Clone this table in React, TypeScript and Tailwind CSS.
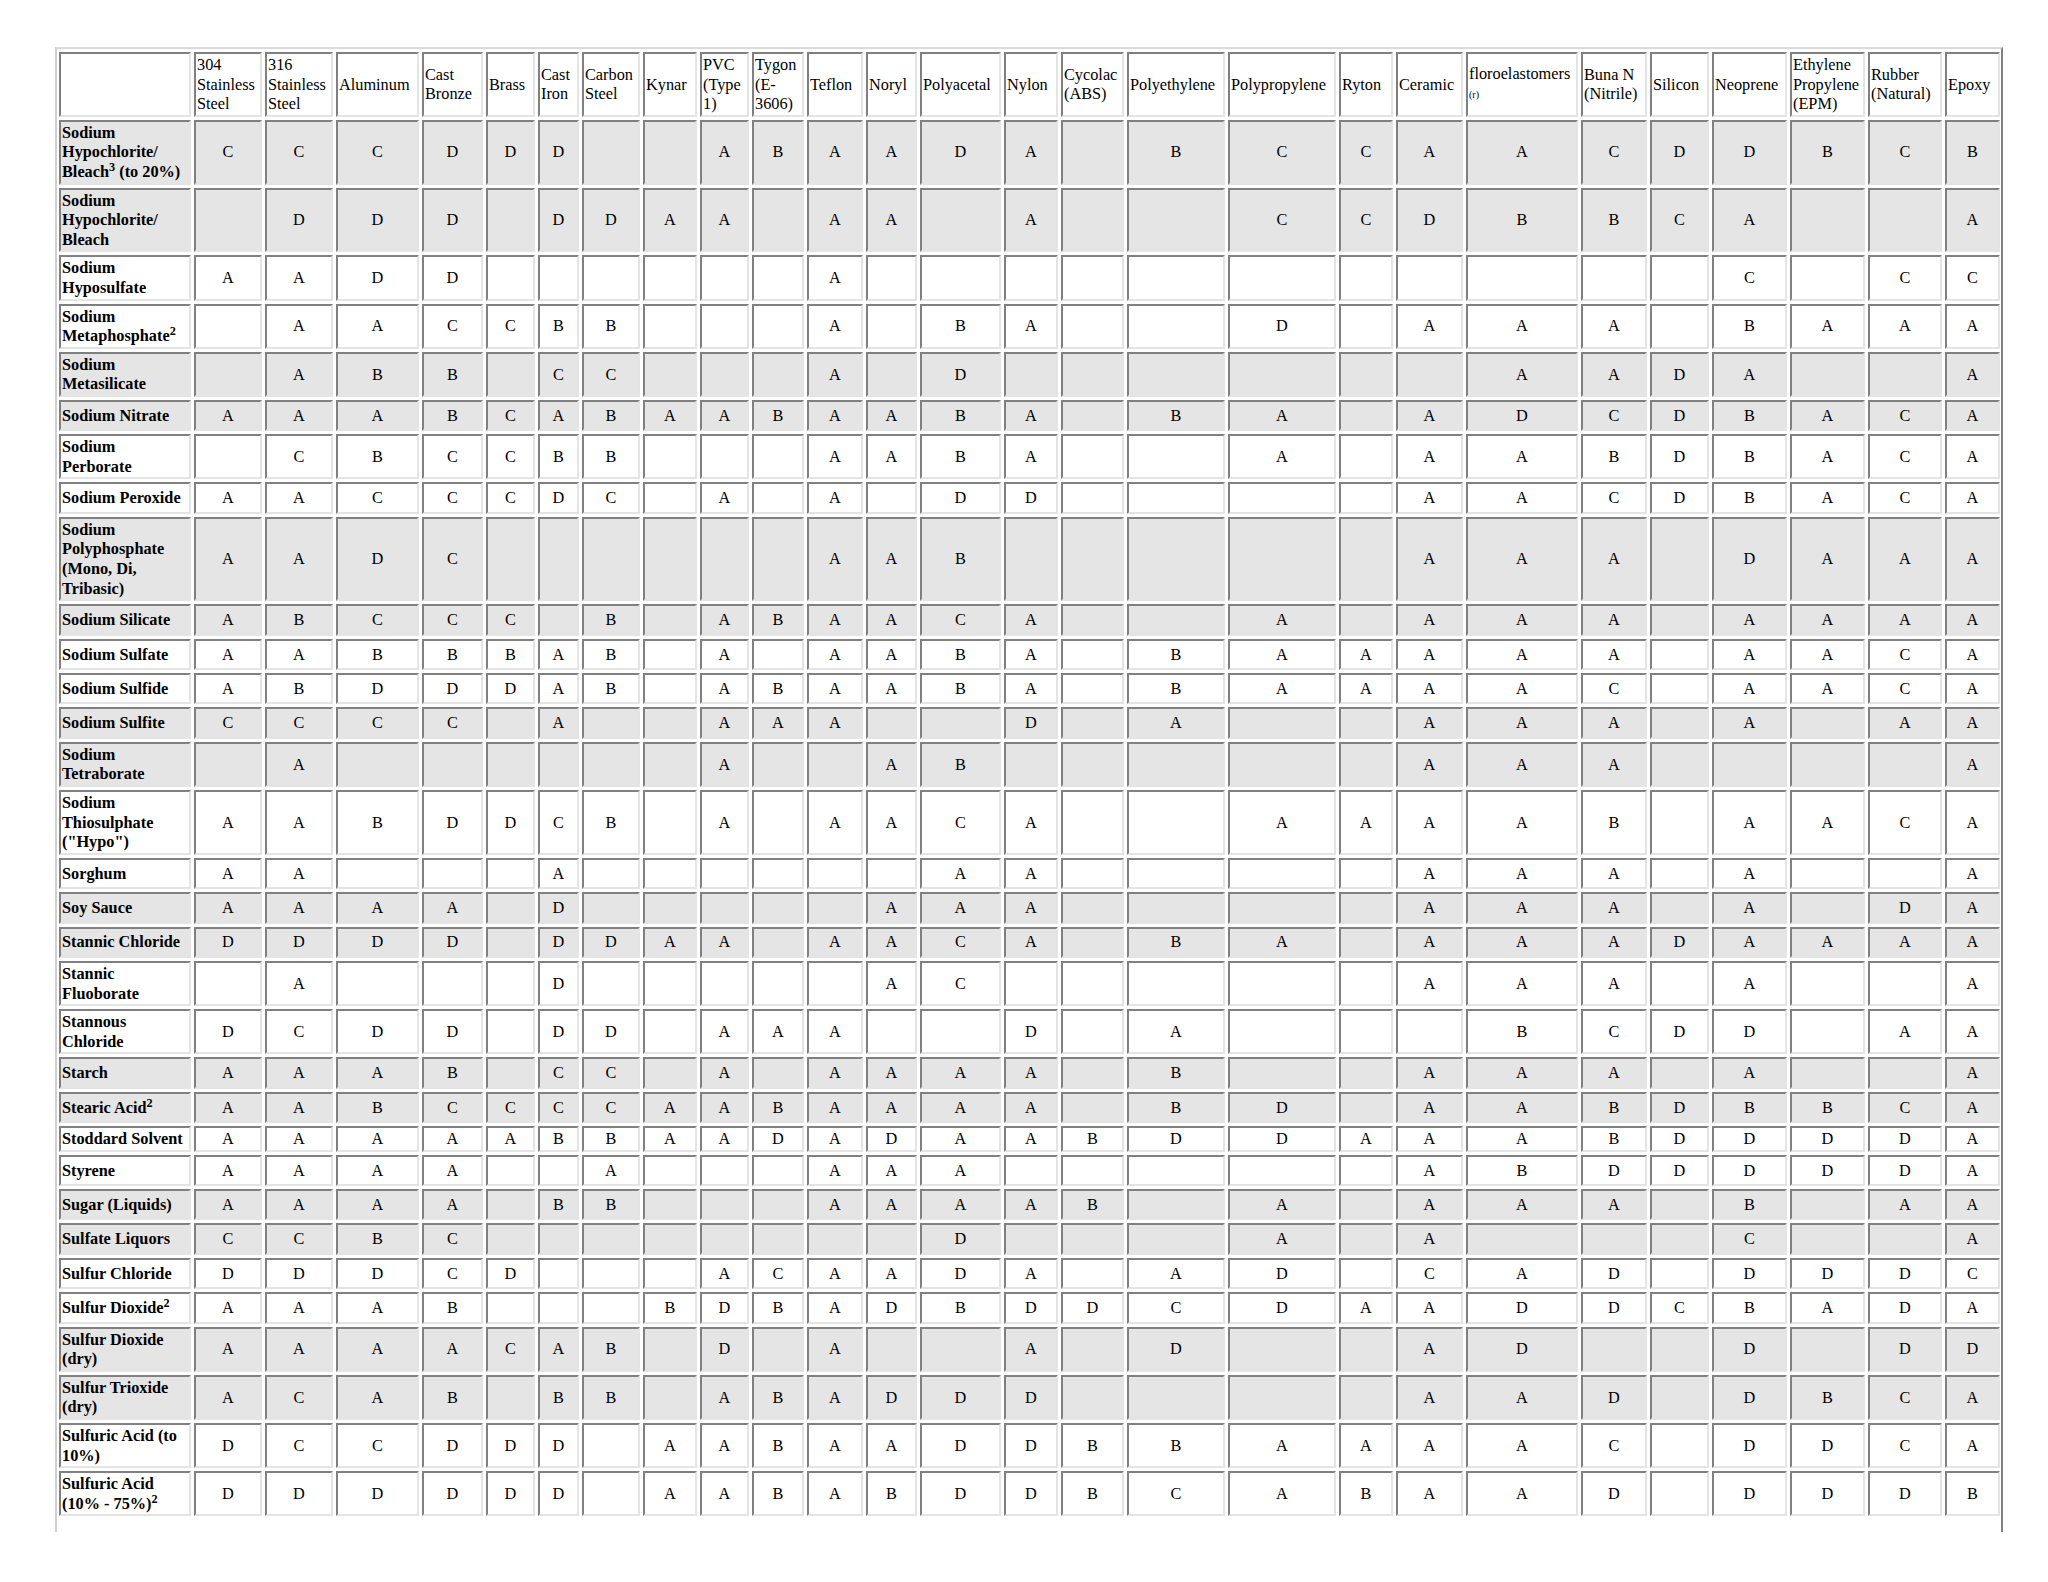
import React from "react";

const colWidths =
  "grid-cols-[132px_68px_68px_83px_61px_49px_41px_58px_54px_49px_52px_56px_51px_81px_54px_63px_98px_108px_54px_67px_112px_66px_59px_75px_75px_74px_55px]";

const headers: React.ReactNode[] = [
  "304 Stainless Steel",
  "316 Stainless Steel",
  "Aluminum",
  "Cast Bronze",
  "Brass",
  "Cast Iron",
  "Carbon Steel",
  "Kynar",
  "PVC (Type 1)",
  "Tygon (E-3606)",
  "Teflon",
  "Noryl",
  "Polyacetal",
  "Nylon",
  "Cycolac (ABS)",
  "Polyethylene",
  "Polypropylene",
  "Ryton",
  "Ceramic",
  <>
    floroelastomers
    <br />
    <span className="text-[10px]">(r)</span>
  </>,
  "Buna N (Nitrile)",
  "Silicon",
  "Neoprene",
  "Ethylene Propylene (EPM)",
  "Rubber (Natural)",
  "Epoxy",
];

type Row = { name: React.ReactNode; v: string; tight?: boolean };

const rows: Row[] = [
  { name: <>Sodium Hypochlorite/ Bleach<sup>3</sup> (to 20%)</>, v: "CCCDDD..ABAADA.BCCAACDDBCB" },
  { name: "Sodium Hypochlorite/ Bleach", v: ".DDD.DDAA.AA.A..CCDBBCA..A" },
  { name: "Sodium Hyposulfate", v: "AADD......A...........C.CC" },
  { name: <>Sodium Metaphosphate<sup>2</sup></>, v: ".AACCBB...A.BA..D.AAA.BAAA" },
  { name: "Sodium Metasilicate", v: ".ABB.CC...A.D......AADA..A" },
  { name: "Sodium Nitrate", v: "AAABCABAABAABA.BA.ADCDBACA" },
  { name: "Sodium Perborate", v: ".CBCCBB...AABA..A.AABDBACA" },
  { name: "Sodium Peroxide", v: "AACCCDC.A.A.DD....AACDBACA" },
  { name: "Sodium Polyphosphate (Mono, Di, Tribasic)", v: "AADC......AAB.....AAA.DAAA" },
  { name: "Sodium Silicate", v: "ABCCC.B.ABAACA..A.AAA.AAAA" },
  { name: "Sodium Sulfate", v: "AABBBAB.A.AABA.BAAAAA.AACA" },
  { name: "Sodium Sulfide", v: "ABDDDAB.ABAABA.BAAAAC.AACA" },
  { name: "Sodium Sulfite", v: "CCCC.A..AAA..D.A..AAA.A.AA" },
  { name: "Sodium Tetraborate", v: ".A......A..AB.....AAA....A" },
  { name: 'Sodium Thiosulphate ("Hypo")', v: "AABDDCB.A.AACA..AAAAB.AACA" },
  { name: "Sorghum", v: "AA...A......AA....AAA.A..A" },
  { name: "Soy Sauce", v: "AAAA.D.....AAA....AAA.A.DA" },
  { name: "Stannic Chloride", v: "DDDD.DDAA.AACA.BA.AAADAAAA" },
  { name: "Stannic Fluoborate", v: ".A...D.....AC.....AAA.A..A" },
  { name: "Stannous Chloride", v: "DCDD.DD.AAA..D.A...BCDD.AA" },
  { name: "Starch", v: "AAAB.CC.A.AAAA.B..AAA.A..A" },
  { name: <>Stearic Acid<sup>2</sup></>, v: "AABCCCCAABAAAA.BD.AABDBBCA" },
  { name: "Stoddard Solvent", v: "AAAAABBAADADAABDDAAABDDDDA", tight: true },
  { name: "Styrene", v: "AAAA..A...AAA.....ABDDDDDA" },
  { name: "Sugar (Liquids)", v: "AAAA.BB...AAAAB.A.AAA.B.AA" },
  { name: "Sulfate Liquors", v: "CCBC........D...A.A...C..A" },
  { name: "Sulfur Chloride", v: "DDDCD...ACAADA.AD.CAD.DDDC" },
  { name: <>Sulfur Dioxide<sup>2</sup></>, v: "AAAB...BDBADBDDCDAADDCBADA" },
  { name: "Sulfur Dioxide (dry)", v: "AAAACAB.D.A..A.D..AD..D.DD" },
  { name: "Sulfur Trioxide (dry)", v: "ACAB.BB.ABADDD....AAD.DBCA" },
  { name: "Sulfuric Acid (to 10%)", v: "DCCDDD.AABAADDBBAAAAC.DDCA" },
  { name: <>Sulfuric Acid (10% - 75%)<sup>2</sup></>, v: "DDDDDD.AABABDDBCABAAD.DDDB" },
];

const cellBase =
  "border-2 border-t-[#808080] border-l-[#808080] border-r-[#e4e4e4] border-b-[#e4e4e4] px-px py-px flex items-center";

export default function App() {
  return (
    <div className="min-h-[1582px] w-[2048px] bg-white pt-[47px] pl-[55px] font-['Liberation_Serif','Times_New_Roman',serif] text-[16.3px] leading-[19.6px] text-black">
      <div className="w-fit border-t-2 border-l-2 border-r-2 border-t-[#d9d9d9] border-l-[#d0d0d0] border-r-[#808080] pt-[3px] pl-[2px] pr-px pb-[16px]">
        <div className={`grid ${colWidths} gap-[3px]`}>
          <div className={`${cellBase} bg-white`} />
          {headers.map((h, i) => (
            <div key={i} className={`${cellBase} bg-white`}>
              <div>{h}</div>
            </div>
          ))}
          {rows.map((r, ri) => {
            const gray = Math.floor(ri / 2) % 2 === 0;
            const bg = gray ? "bg-[#e5e5e5]" : "bg-white";
            const mh = r.tight ? "" : "min-h-[31.4px]";
            return (
              <React.Fragment key={ri}>
                <div className={`${cellBase} ${bg} ${mh} font-bold`}>
                  <div>{r.name}</div>
                </div>
                {r.v.split("").map((c, ci) => (
                  <div key={ci} className={`${cellBase} ${bg} ${mh} justify-center`}>
                    {c === "." ? "" : c}
                  </div>
                ))}
              </React.Fragment>
            );
          })}
        </div>
      </div>
    </div>
  );
}
